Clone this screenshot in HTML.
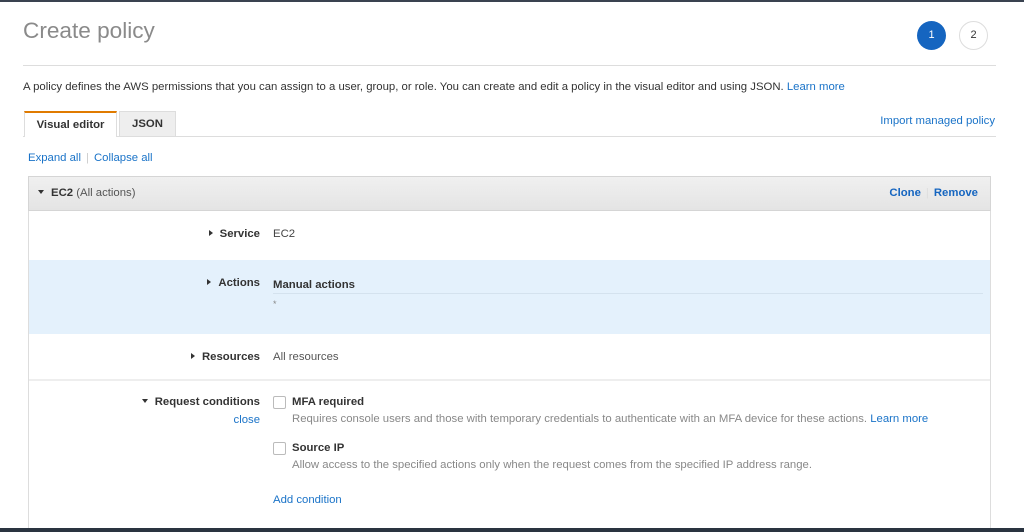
<!DOCTYPE html>
<html><head><meta charset="utf-8"><style>
*{margin:0;padding:0;box-sizing:border-box}
body{width:1024px;height:532px;background:#fff;font-family:"Liberation Sans",Arial,sans-serif;font-size:11.35px;color:#333;position:relative;overflow:hidden}
.a{position:absolute;white-space:nowrap}
.l{color:#1a73c8}
.b{font-weight:bold}
.tri{display:inline-block;width:0;height:0;border-left:4px solid #333;border-top:3.5px solid transparent;border-bottom:3.5px solid transparent;margin-right:7px;vertical-align:1px}
.trid{display:inline-block;width:0;height:0;border-top:4px solid #333;border-left:3.5px solid transparent;border-right:3.5px solid transparent;margin-right:7px;vertical-align:2px}
.cb{position:absolute;width:13px;height:13px;border:1px solid #bbb;border-radius:2px;background:#fff}
.g{color:#888}
.r{text-align:right}
</style></head><body>
<div class="a" style="left:0;top:0;width:1024px;height:2px;background:#3a4350"></div>
<div class="a" style="left:23px;top:18px;font-size:22.6px;color:#8a8a8a">Create policy</div>
<div class="a" style="left:917px;top:21px;width:29px;height:29px;border-radius:50%;background:#1565c0;color:#fff;text-align:center;line-height:29px;font-size:11px">1</div>
<div class="a" style="left:959px;top:21px;width:29px;height:29px;border-radius:50%;border:1px solid #ddd;color:#333;text-align:center;line-height:27px;font-size:11px">2</div>
<div class="a" style="left:23px;top:65px;width:973px;height:1px;background:#ddd"></div>
<div class="a" style="left:23px;top:81px">A policy defines the AWS permissions that you can assign to a user, group, or role. You can create and edit a policy in the visual editor and using JSON. <span class="l">Learn more</span></div>
<div class="a" style="left:23px;top:136px;width:973px;height:1px;background:#ddd"></div>
<div class="a b" style="left:24px;top:111px;width:93px;height:26px;border:1px solid #ddd;border-top:2px solid #e07b00;border-bottom:none;background:#fff;text-align:center;line-height:25px;color:#333">Visual editor</div>
<div class="a b" style="left:119px;top:111px;width:57px;height:25px;border:1px solid #ddd;border-bottom:none;background:#eee;text-align:center;line-height:25px;color:#333">JSON</div>
<div class="a l r" style="right:29px;top:115px">Import managed policy</div>
<div class="a" style="left:28px;top:152px"><span class="l">Expand all</span><span style="color:#ccc;margin:0 5px">|</span><span class="l">Collapse all</span></div>
<div class="a" style="left:28px;top:176px;width:963px;height:352px;border:1px solid #ddd;border-bottom:none"></div>
<div class="a" style="left:28px;top:176px;width:963px;height:35px;background:linear-gradient(#f0f0f0,#e4e4e4);border:1px solid #d5d5d5"></div>
<div class="a" style="left:38px;top:187px"><span class="trid"></span><b>EC2</b> <span style="color:#555">(All actions)</span></div>
<div class="a b r" style="right:46px;top:187px;color:#1565c0">Clone<span style="color:#ddd;font-weight:normal;margin:0 5px">|</span>Remove</div>
<div class="a r" style="right:764px;top:228px"><span class="tri"></span><b>Service</b></div>
<div class="a" style="left:273px;top:228px;color:#444">EC2</div>
<div class="a" style="left:29px;top:260px;width:961px;height:74px;background:#e4f1fc"></div>
<div class="a r" style="right:764px;top:277px"><span class="tri"></span><b>Actions</b></div>
<div class="a b" style="left:273px;top:279px">Manual actions</div>
<div class="a" style="left:273px;top:293px;width:710px;height:1px;background:#d4e2ee"></div>
<div class="a g" style="left:273px;top:299px;font-size:9px">*</div>
<div class="a r" style="right:764px;top:351px"><span class="tri"></span><b>Resources</b></div>
<div class="a" style="left:273px;top:351px;color:#555">All resources</div>
<div class="a" style="left:29px;top:379px;width:961px;height:2px;background:#eee"></div>
<div class="a r" style="right:764px;top:396px"><span class="trid"></span><b>Request conditions</b></div>
<div class="a l r" style="right:764px;top:414px">close</div>
<div class="cb" style="left:273px;top:396px"></div>
<div class="a b" style="left:292px;top:396px">MFA required</div>
<div class="a g" style="left:292px;top:413px">Requires console users and those with temporary credentials to authenticate with an MFA device for these actions. <span class="l">Learn more</span></div>
<div class="cb" style="left:273px;top:442px"></div>
<div class="a b" style="left:292px;top:442px">Source IP</div>
<div class="a g" style="left:292px;top:459px">Allow access to the specified actions only when the request comes from the specified IP address range.</div>
<div class="a l" style="left:273px;top:494px">Add condition</div>
<div class="a" style="left:0;top:528px;width:1024px;height:4px;background:#2a3440"></div>
</body></html>
